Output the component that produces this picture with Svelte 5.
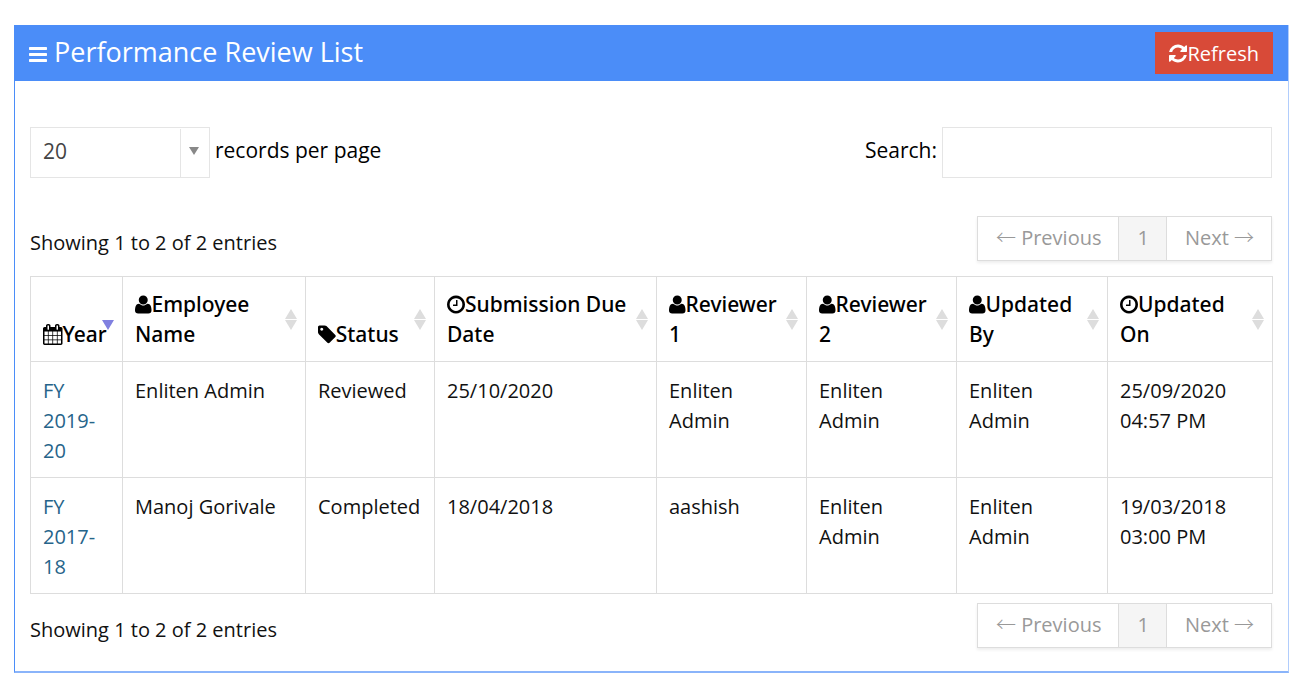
<script lang="ts">
	type Icon = 'calendar' | 'user' | 'tag' | 'clock';

	// viewBox and outline of every icon; all share a 1792-unit em
	const icons: Record<Icon | 'bars' | 'refresh', { box: string; d: string }> = {
		bars: {
			box: '0 0 1536 1792',
			d: 'M1536 1344v128q0 26-19 45t-45 19h-1408q-26 0-45-19t-19-45v-128q0-26 19-45t45-19h1408q26 0 45 19t19 45zm0-512v128q0 26-19 45t-45 19h-1408q-26 0-45-19t-19-45v-128q0-26 19-45t45-19h1408q26 0 45 19t19 45zm0-512v128q0 26-19 45t-45 19h-1408q-26 0-45-19t-19-45v-128q0-26 19-45t45-19h1408q26 0 45 19t19 45z'
		},
		refresh: {
			box: '128 0 1536 1792',
			d: 'M1639 1056q0 5-1 7-64 268-268 434.5t-478 166.5q-146 0-282.5-55t-243.5-157l-129 129q-19 19-45 19t-45-19-19-45v-448q0-26 19-45t45-19h448q26 0 45 19t19 45-19 45l-137 137q71 66 161 102t187 36q134 0 250-65t186-179q11-17 53-117 8-23 30-23h192q13 0 22.5 9.5t9.5 22.5zm25-800v448q0 26-19 45t-45 19h-448q-26 0-45-19t-19-45 19-45l138-138q-148-137-349-137-134 0-250 65t-186 179q-11 17-53 117-8 23-30 23h-199q-13 0-22.5-9.5t-9.5-22.5v-7q65-268 270-434.5t480-166.5q146 0 284 55.5t245 156.5l130-129q19-19 45-19t45 19 19 45z'
		},
		calendar: {
			box: '64 0 1664 1792',
			d: 'M192 1664h288v-288h-288v288zm352 0h320v-288h-320v288zm-352-352h288v-320h-288v320zm352 0h320v-320h-320v320zm-352-384h288v-288h-288v288zm736 736h320v-288h-320v288zm-384-736h320v-288h-320v288zm768 736h288v-288h-288v288zm-384-352h320v-320h-320v320zm-352-864v-288q0-13-9.5-22.5t-22.5-9.5h-64q-13 0-22.5 9.5t-9.5 22.5v288q0 13 9.5 22.5t22.5 9.5h64q13 0 22.5-9.5t9.5-22.5zm736 864h288v-320h-288v320zm-384-384h320v-288h-320v288zm384 0h288v-288h-288v288zm32-480v-288q0-13-9.5-22.5t-22.5-9.5h-64q-13 0-22.5 9.5t-9.5 22.5v288q0 13 9.5 22.5t22.5 9.5h64q13 0 22.5-9.5t9.5-22.5zm384-64v1280q0 52-38 90t-90 38h-1408q-52 0-90-38t-38-90v-1280q0-52 38-90t90-38h128v-96q0-66 47-113t113-47h64q66 0 113 47t47 113v96h384v-96q0-66 47-113t113-47h64q66 0 113 47t47 113v96h128q52 0 90 38t38 90z'
		},
		user: {
			box: '0 0 1408 1792',
			d: 'M1408 1405q0 120-73 189.5t-194 69.5h-874q-121 0-194-69.5t-73-189.5q0-53 3.5-103.5t14-109 26.5-108.5 43-97.5 62-81 85.5-53.5 111.5-20q9 0 42 21.5t74.5 48 108 48 133.5 21.5 133.5-21.5 108-48 74.5-48 42-21.5q61 0 111.5 20t85.5 53.5 62 81 43 97.5 26.5 108.5 14 109 3.5 103.5zm-320-893q0 159-112.5 271.5t-271.5 112.5-271.5-112.5-112.5-271.5 112.5-271.5 271.5-112.5 271.5 112.5 112.5 271.5z'
		},
		tag: {
			box: '128 0 1515 1792',
			d: 'M576 448q0-53-37.5-90.5t-90.5-37.5-90.5 37.5-37.5 90.5 37.5 90.5 90.5 37.5 90.5-37.5 37.5-90.5zm1067 576q0 53-37 90l-491 492q-39 37-91 37-53 0-90-37l-715-716q-38-37-64.5-101t-26.5-117v-416q0-52 38-90t90-38h416q53 0 117 26.5t102 64.5l715 714q37 39 37 91z'
		},
		clock: {
			box: '128 0 1536 1792',
			d: 'M1024 544v448q0 14-9 23t-23 9h-320q-14 0-23-9t-9-23v-64q0-14 9-23t23-9h224v-352q0-14 9-23t23-9h64q14 0 23 9t9 23zm416 352q0-148-73-273t-198-198-273-73-273 73-198 198-73 273 73 273 198 198 273 73 273-73 198-198 73-273zm224 0q0 209-103 385.5t-279.5 279.5-385.5 103-385.5-103-279.5-279.5-103-385.5 103-385.5 279.5-279.5 385.5-103 385.5 103 279.5 279.5 103 385.5z'
		}
	};

	const columns: { key: string; label: string; icon: Icon; width: number }[] = [
		{ key: 'year', label: 'Year', icon: 'calendar', width: 92 },
		{ key: 'employee', label: 'Employee Name', icon: 'user', width: 183 },
		{ key: 'status', label: 'Status', icon: 'tag', width: 129 },
		{ key: 'due', label: 'Submission Due Date', icon: 'clock', width: 222 },
		{ key: 'reviewer1', label: 'Reviewer 1', icon: 'user', width: 150 },
		{ key: 'reviewer2', label: 'Reviewer 2', icon: 'user', width: 150 },
		{ key: 'updatedBy', label: 'Updated By', icon: 'user', width: 151 },
		{ key: 'updatedOn', label: 'Updated On', icon: 'clock', width: 165 }
	];
	const total = columns.reduce((sum, c) => sum + c.width, 0);

	const reviews: Record<string, string>[] = [
		{
			year: 'FY 2019-20',
			employee: 'Enliten Admin',
			status: 'Reviewed',
			due: '25/10/2020',
			reviewer1: 'Enliten Admin',
			reviewer2: 'Enliten Admin',
			updatedBy: 'Enliten Admin',
			updatedOn: '25/09/2020 04:57 PM'
		},
		{
			year: 'FY 2017-18',
			employee: 'Manoj Gorivale',
			status: 'Completed',
			due: '18/04/2018',
			reviewer1: 'aashish',
			reviewer2: 'Enliten Admin',
			updatedBy: 'Enliten Admin',
			updatedOn: '19/03/2018 03:00 PM'
		}
	];

	let pageSize = $state('20');
	let search = $state('');

	const rows = $derived(
		reviews.filter((r) => Object.values(r).join(' ').toLowerCase().includes(search.toLowerCase()))
	);
</script>

{#snippet glyph(name: Icon | 'bars' | 'refresh')}
	<svg class="icon" viewBox={icons[name].box} aria-hidden="true"><path d={icons[name].d} /></svg>
{/snippet}

{#snippet pager()}
	<div class="pager-row">
		<span>Showing {rows.length ? 1 : 0} to {rows.length} of {rows.length} entries</span>
		<nav class="pager">
			<button type="button"><i>←</i> Previous</button>
			<button type="button" class="current">1</button>
			<button type="button">Next <i>→</i></button>
		</nav>
	</div>
{/snippet}

<section class="panel">
	<header>
		<h1>{@render glyph('bars')} Performance Review List</h1>
		<button type="button" class="refresh">{@render glyph('refresh')}Refresh</button>
	</header>

	<div class="body">
		<div class="filters">
			<label>
				<span class="select">
					<select bind:value={pageSize}>
						<option>10</option>
						<option>20</option>
						<option>50</option>
					</select>
				</span>
				records per page
			</label>
			<label>Search: <input type="text" bind:value={search} /></label>
		</div>

		{@render pager()}

		<table>
			<colgroup>
				{#each columns as c (c.key)}
					<col style:width="{(c.width / total) * 100}%" />
				{/each}
			</colgroup>
			<thead>
				<tr>
					{#each columns as c (c.key)}
						<th class:sorted={c.key === 'year'}>{@render glyph(c.icon)}{c.label}</th>
					{/each}
				</tr>
			</thead>
			<tbody>
				{#each rows as r (r.year)}
					<tr>
						{#each columns as c (c.key)}
							<td>
								{#if c.key === 'year'}<a href="#review">{r.year}</a>{:else}{r[c.key]}{/if}
							</td>
						{/each}
					</tr>
				{/each}
			</tbody>
		</table>

		{@render pager()}
	</div>
</section>

<style>
	:global(body) {
		background: #fff;
	}
	.panel {
		margin: 25px 13px 15px 14px;
		border: 1px solid #b1cdfc;
		border-left-color: #4b8df8;
		border-bottom: 2px solid #8ab4fa;
		border-top: 0;
		font: 400 20px/30px 'Open Sans', sans-serif;
		color: #111;
	}
	button,
	select,
	input {
		font: inherit;
	}
	.icon {
		height: 21px;
		fill: currentColor;
		vertical-align: -3px;
	}
	header {
		display: flex;
		justify-content: space-between;
		align-items: center;
		height: 56px;
		padding: 0 15px 0 14px;
		background: #4b8df8;
		color: #fff;
	}
	h1 {
		margin: 0;
		padding-bottom: 2px;
		font-size: 27px;
		font-weight: 400;
	}
	.refresh {
		height: 42px;
		padding: 2px 14px 0;
		border: 0;
		background: #d84a38;
		color: #fff;
	}
	.body {
		padding: 46px 16px 23px 15px;
	}
	.filters {
		display: flex;
		justify-content: space-between;
		margin-bottom: 38px;
		font-size: 21px;
		color: #000;
	}
	.filters label {
		display: flex;
		gap: 5px;
		line-height: 47px;
	}
	.select {
		position: relative;
		width: 180px;
	}
	.select::before {
		content: '';
		position: absolute;
		top: 2px;
		bottom: 1px;
		right: 29px;
		border-left: 1px solid #e5e5e5;
	}
	.select::after {
		content: '';
		position: absolute;
		top: 20px;
		right: 11px;
		border: 5px solid transparent;
		border-top: 8px solid #888;
		border-bottom: 0;
		pointer-events: none;
	}
	select,
	input {
		display: block;
		box-sizing: border-box;
		height: 51px;
		padding: 0 12px 2px;
		border: 1px solid #e5e5e5;
		border-radius: 0;
		background: #fff;
		color: #444;
		appearance: none;
	}
	select {
		width: 100%;
	}
	input {
		width: 330px;
	}
	.pager-row {
		display: flex;
		justify-content: space-between;
		align-items: center;
	}
	.pager-row span {
		padding-top: 8px;
	}
	.pager {
		display: flex;
		border: 1px solid #ddd;
		box-shadow: 0 2px 3px rgba(0, 0, 0, 0.07);
	}
	.pager button {
		height: 43px;
		padding: 0 17px 2px 18px;
		border: 0;
		background: #fff;
		color: #999;
	}
	.pager i {
		font-family: 'Noto Sans CJK JP', sans-serif;
		font-style: normal;
		font-weight: 300;
		line-height: 20px;
	}
	.pager .current {
		border: solid #ddd;
		border-width: 0 1px;
		background: #f5f5f5;
	}
	table {
		width: calc(100% + 1px);
		margin: 15px 0 9px;
		border-collapse: collapse;
		table-layout: fixed;
	}
	th,
	td {
		padding: 14px 12px 11px;
		border: 1px solid #ddd;
		text-align: left;
		vertical-align: top;
	}
	th {
		position: relative;
		padding: 12px 20px 12px 12px;
		vertical-align: bottom;
		font-family: 'Noto Sans', 'Open Sans', sans-serif;
		font-size: 21px;
		font-weight: 500;
		color: #000;
	}
	th::before,
	th::after {
		content: '';
		position: absolute;
		right: 8px;
		border: 6px solid transparent;
	}
	th::before {
		bottom: 50%;
		border-top: 0;
		border-bottom: 10px solid #ddd;
	}
	th::after {
		top: 50%;
		margin-top: 1px;
		border-bottom: 0;
		border-top: 10px solid #ddd;
	}
	th.sorted {
		padding-right: 0;
	}
	th.sorted::before {
		display: none;
	}
	th.sorted::after {
		border-top-color: #8080e0;
	}
	a {
		color: #26648a;
		text-decoration: none;
	}
</style>
